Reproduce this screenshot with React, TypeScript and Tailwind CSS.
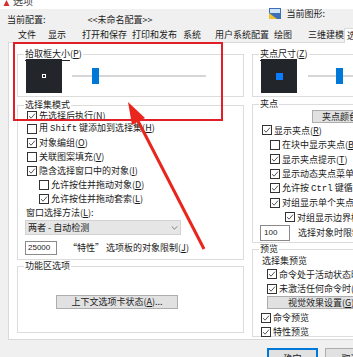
import React from "react";

const Key = ({ k }: { k: string }) => (
  <>
    (<span className="underline">{k}</span>)
  </>
);

const CheckBox = ({ checked }: { checked?: boolean }) => (
  <span className="w-[10px] h-[10px] border border-[#333] bg-white flex items-center justify-center shrink-0">
    {checked && (
      <svg viewBox="0 0 10 10" className="w-[8px] h-[8px]">
        <path d="M1.3 5.2 L3.9 7.7 L8.7 2.1" stroke="#2a2a2a" strokeWidth="1" fill="none" />
      </svg>
    )}
  </span>
);

const Row = ({
  checked,
  children,
  className = "",
}: {
  checked?: boolean;
  children: React.ReactNode;
  className?: string;
}) => (
  <div className={`flex items-center gap-[2px] whitespace-nowrap ${className}`}>
    <CheckBox checked={checked} />
    <span>{children}</span>
  </div>
);

const Slider = ({ width, thumb }: { width: number; thumb: string }) => (
  <div className="relative h-[16px] flex items-center" style={{ width }}>
    <div className="w-full h-[2px] bg-[#d6d6d6]" />
    <div className={`absolute top-0 w-[7px] h-[16px] bg-[#0078d7] ${thumb}`} />
  </div>
);

const Legend = ({ children }: { children: React.ReactNode }) => (
  <legend className="px-[1px] leading-[10px] whitespace-nowrap">{children}</legend>
);

const tabs = [
  { label: "文件", w: "w-[30px]" },
  { label: "显示", w: "w-[34px]" },
  { label: "打开和保存", w: "w-[50px]" },
  { label: "打印和发布", w: "w-[51px]" },
  { label: "系统", w: "w-[32px]" },
  { label: "用户系统配置", w: "w-[59px]" },
  { label: "绘图", w: "w-[34px]" },
  { label: "三维建模", w: "w-[36px]" },
];

export default function App() {
  return (
    <div className="relative w-[353px] h-[357px] overflow-hidden bg-[#f0f0f0] text-[9px] text-[#1a1a1a] font-['Noto_Sans_CJK_SC','Noto_Sans',sans-serif]">
      {/* title bar, top cut off */}
      <div className="h-[9px] bg-white overflow-hidden flex items-start gap-[3px] pl-[3px]">
        <svg viewBox="0 0 10 10" className="w-[7px] h-[6px] shrink-0">
          <path d="M0 10 L5 0 L10 10 Z" fill="#d32f2f" />
        </svg>
        <span className="text-[10px] leading-[10px] -mt-[4px] text-[#444]">选项</span>
      </div>

      {/* current profile row */}
      <div className="h-[19px] flex items-start">
        <span className="pl-[7px] pt-[6px] leading-[10px]">当前配置:</span>
        <span className="ml-[42px] pt-[6px] leading-[10px]">&lt;&lt;未命名配置&gt;&gt;</span>
        <div className="ml-auto mr-[28px] -mt-[1px] flex items-center gap-[5px]">
          <svg viewBox="0 0 12 11" className="w-[12px] h-[11px]">
            <rect x="0" y="0" width="12" height="11" fill="#3b6fb6" />
            <rect x="1" y="1" width="10" height="4" fill="#cfe3f7" />
            <path d="M0 11 L0 5 L8 11 Z" fill="#f2c230" />
          </svg>
          <span className="leading-[10px]">当前图形:</span>
        </div>
      </div>

      {/* tabs */}
      <div className="h-[14px] flex items-end pl-[18px]">
        {tabs.map((t) => (
          <span key={t.label} className={`${t.w} shrink-0 leading-[14px] whitespace-nowrap`}>
            {t.label}
          </span>
        ))}
        <span className="shrink-0 h-[15px] -mb-[1px] border border-b-0 border-[#d9d9d9] bg-white pl-[2px] pr-[4px] leading-[14px] whitespace-nowrap z-10">
          选择集
        </span>
      </div>

      {/* tab page */}
      <div className="ml-[8px] w-[500px] h-[298px] bg-white border border-[#d9d9d9] flex gap-[8px] pl-[8px]">
        {/* left column */}
        <div className="w-[227px] shrink-0 flex flex-col pt-[6px]">
          <fieldset className="h-[48px] border border-[#dcdcdc] px-[6px]">
            <Legend>
              <span className="border-b border-[#222]">拾取框大小</span>
              <Key k="P" />
            </Legend>
            <div className="flex items-center">
              <div className="ml-[2px] w-[36px] h-[34px] bg-[#22262b] flex items-center justify-center">
                <div className="w-[4px] h-[4px] border border-white" />
              </div>
              <div className="ml-[10px]">
                <Slider width={134} thumb="left-[20px]" />
              </div>
            </div>
          </fieldset>

          <fieldset className="mt-[3px] h-[160px] border border-[#dcdcdc] px-[6px]">
            <Legend>选择集模式</Legend>
            <div className="flex flex-col">
              <Row checked className="h-[12px] ml-[3px]">
                先选择后执行<Key k="N" />
              </Row>
              <Row className="h-[14px] ml-[3px]">
                用 <span className="font-['Liberation_Mono',monospace]">Shift</span> 键添加到选择集<Key k="H" />
              </Row>
              <Row checked className="h-[14px] ml-[3px]">
                对象编组<Key k="O" />
              </Row>
              <Row className="h-[14px] ml-[3px]">
                关联图案填充<Key k="V" />
              </Row>
              <Row checked className="h-[14px] ml-[3px]">
                隐含选择窗口中的对象<Key k="I" />
              </Row>
              <Row className="h-[14px] ml-[15px]">
                允许按住并拖动对象<Key k="D" />
              </Row>
              <Row checked className="h-[14px] ml-[15px]">
                允许按住并拖动套索<Key k="L" />
              </Row>
              <div className="h-[14px] flex items-center ml-[2px]">
                窗口选择方法<Key k="L" />:
              </div>
              <div className="ml-[1px] w-[156px] h-[15px] bg-[#e6e6e6] border border-[#d2d2d2] flex items-center justify-between px-[2px]">
                <span>两者 - 自动检测</span>
                <svg viewBox="0 0 8 5" className="w-[7px] h-[4px]">
                  <path d="M0.5 0.5 L4 4 L7.5 0.5" stroke="#666" strokeWidth="1" fill="none" />
                </svg>
              </div>
              <div className="mt-[6px] flex items-center">
                <div className="ml-[1px] w-[32px] h-[14px] border border-[#8a8a8a] bg-white flex items-center pl-[2px] text-[8px] font-['Liberation_Sans',sans-serif]">
                  25000
                </div>
                <span className="ml-[11px] whitespace-nowrap">
                  “特性” 选项板的对象限制<Key k="J" />
                </span>
              </div>
            </div>
          </fieldset>

          <fieldset className="mt-[1px] h-[72px] border border-[#dcdcdc] px-[6px]">
            <Legend>功能区选项</Legend>
            <div className="mt-[24px] ml-[32px] w-[122px] h-[14px] bg-[#e1e1e1] border border-[#adadad] flex items-center justify-center whitespace-nowrap">
              上下文选项卡状态<Key k="A" />...
            </div>
          </fieldset>
        </div>

        {/* right column */}
        <div className="w-[227px] shrink-0 flex flex-col pt-[6px]">
          <fieldset className="h-[48px] border border-[#dcdcdc] px-[6px]">
            <Legend>
              <span className="border-b border-[#222]">夹点尺寸</span>
              <Key k="Z" />
            </Legend>
            <div className="flex items-center">
              <div className="ml-[2px] w-[36px] h-[34px] bg-[#22262b] flex items-center justify-center">
                <div className="w-[7px] h-[7px] bg-[#0a7cff]" />
              </div>
              <div className="ml-[11px]">
                <Slider width={150} thumb="left-[28px]" />
              </div>
            </div>
          </fieldset>

          <fieldset className="mt-[2px] h-[144px] border border-[#dcdcdc] px-[6px]">
            <Legend>夹点</Legend>
            <div className="flex flex-col">
              <div className="ml-[53px] mt-[1px] w-[90px] h-[13px] bg-[#e1e1e1] border border-[#adadad] flex items-center pl-[9px] whitespace-nowrap">
                夹点颜色<Key k="C" />...
              </div>
              <Row checked className="h-[14.5px] ml-[3px]">
                显示夹点<Key k="R" />
              </Row>
              <Row className="h-[14.5px] ml-[11px]">
                在块中显示夹点<Key k="B" />
              </Row>
              <Row checked className="h-[14.5px] ml-[11px]">
                显示夹点提示<Key k="T" />
              </Row>
              <Row checked className="h-[14.5px] ml-[11px]">
                显示动态夹点菜单<Key k="U" />
              </Row>
              <Row checked className="h-[14.5px] ml-[11px]">
                允许按 <span className="font-['Liberation_Mono',monospace]">Ctrl</span> 键循环改变对象编辑方式行为<Key k="Y" />
              </Row>
              <Row checked className="h-[14.5px] ml-[11px]">
                对组显示单个夹点<Key k="E" />
              </Row>
              <Row checked className="h-[14.5px] ml-[26px]">
                对组显示边界框<Key k="X" />
              </Row>
              <div className="flex items-center">
                <div className="ml-[1px] w-[30px] h-[16px] border border-[#8a8a8a] bg-white flex items-center pl-[3px] text-[8px] font-['Liberation_Sans',sans-serif]">
                  100
                </div>
                <span className="ml-[8px] whitespace-nowrap">
                  选择对象时限制显示的夹点数<Key k="M" />
                </span>
              </div>
            </div>
          </fieldset>

          <fieldset className="mt-[1px] h-[93px] border border-[#dcdcdc] px-[6px]">
            <Legend>预览</Legend>
            <div className="flex flex-col">
              <div className="h-[13px] ml-[3px] flex items-center whitespace-nowrap">选择集预览</div>
              <Row checked className="h-[14.5px] ml-[8px]">
                命令处于活动状态时<Key k="S" />
              </Row>
              <Row checked className="h-[14.5px] ml-[8px]">
                未激活任何命令时<Key k="W" />
              </Row>
              <div className="ml-[8px] w-[110px] h-[13px] bg-[#e1e1e1] border border-[#adadad] flex items-center pl-[20px] whitespace-nowrap">
                视觉效果设置<Key k="G" />...
              </div>
              <Row checked className="mt-[2px] h-[14px] ml-[2px]">
                命令预览
              </Row>
              <Row checked className="h-[14px] ml-[2px]">
                特性预览
              </Row>
            </div>
          </fieldset>
        </div>
      </div>

      {/* dialog buttons */}
      <div className="mt-[8px] pl-[267px] flex gap-[7px]">
        <div className="w-[51px] h-[21px] shrink-0 border-2 border-[#0078d7] bg-[#e1e1e1] flex items-center justify-center">
          确定
        </div>
        <div className="w-[51px] h-[21px] shrink-0 border border-[#adadad] bg-[#e1e1e1] flex items-center justify-center">
          取消
        </div>
      </div>

      {/* red annotation */}
      <div className="absolute left-[13px] top-[42px] w-[210px] h-[79px] border-2 border-[#e21f26] pointer-events-none" />
      <svg className="absolute left-0 top-0 w-[353px] h-[357px] pointer-events-none" viewBox="0 0 353 357">
        <line x1="137" y1="119" x2="204" y2="249" stroke="#e8261e" strokeWidth="3" />
        <polygon points="128,102 132,125 145,118" fill="#e8261e" />
      </svg>
    </div>
  );
}
